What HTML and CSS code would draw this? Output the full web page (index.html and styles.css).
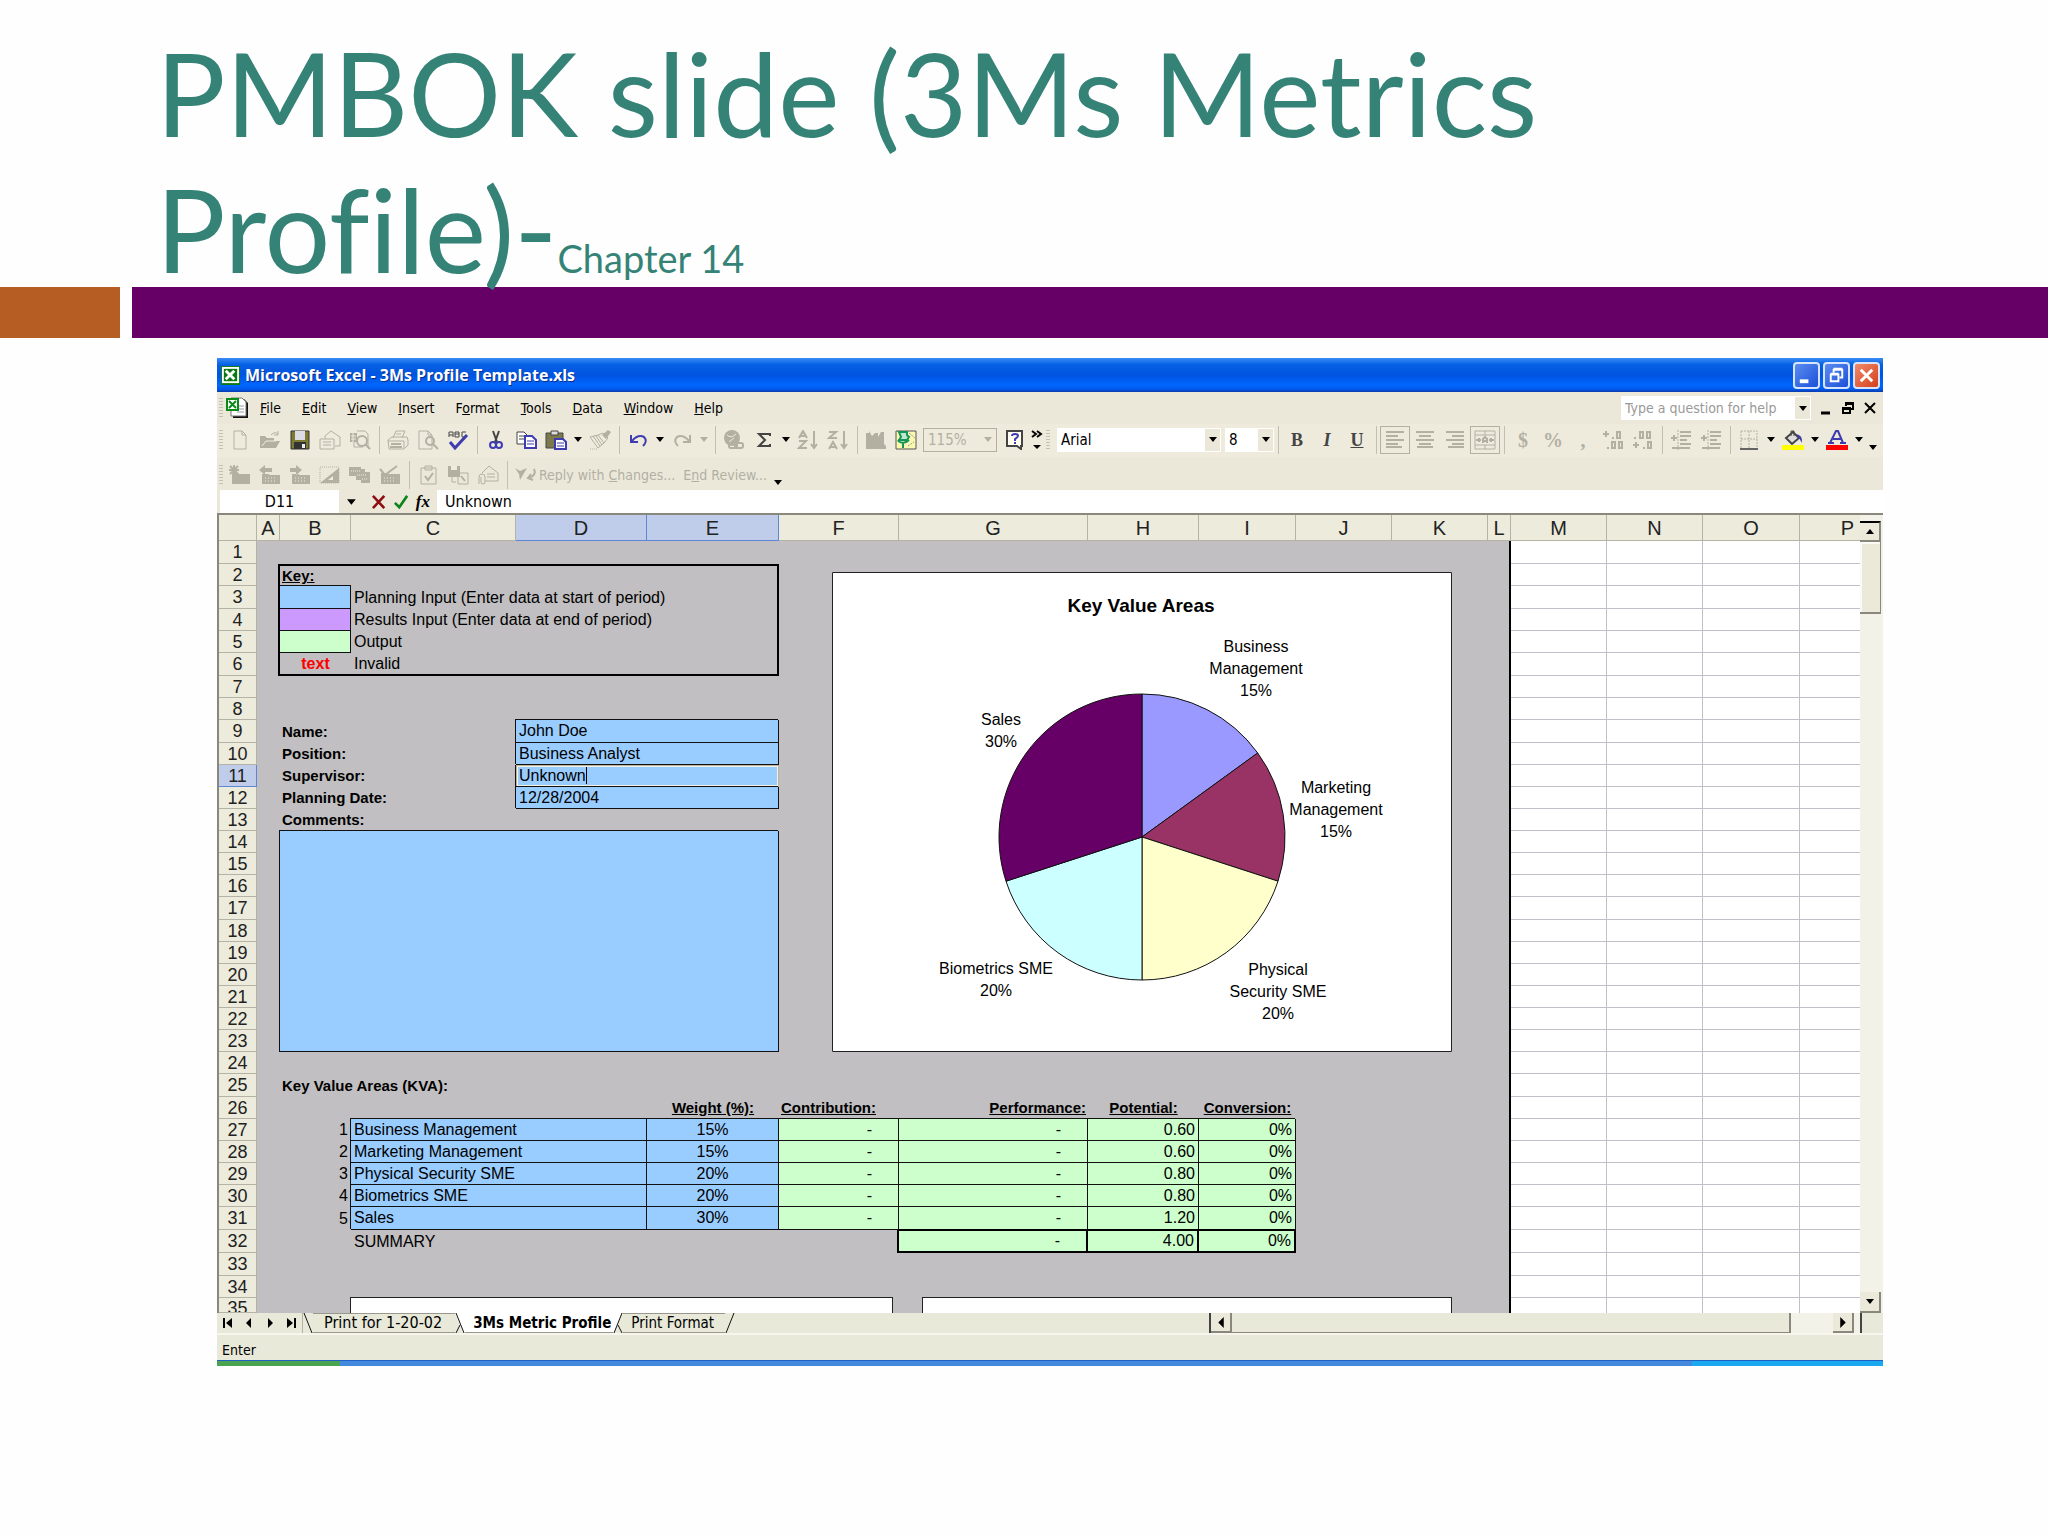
FILE: index.html
```html
<!DOCTYPE html>
<html lang="en">
<head>
<meta charset="utf-8">
<title>PMBOK slide (3Ms Metrics Profile)</title>
<link rel="stylesheet" href="styles.css">
</head>
<body>
<header class="slide-head">
  <h1>PMBOK slide (3Ms Metrics<br>Profile)-<small>Chapter 14</small></h1>
  <div class="bars"><span class="bar-accent"></span><span class="bar-main"></span></div>
</header>

<main class="window">
  <div class="titlebar">
    <svg class="app" viewBox="0 0 20 20"><rect width="20" height="20" fill="#0b7a12"/><rect x="2" y="2" width="16" height="15" fill="#0b7a12" stroke="#fff" stroke-width="2"/><path d="M5 5l9 9M14 5l-9 9" stroke="#fff" stroke-width="3"/></svg>
    <span class="caption">Microsoft Excel - 3Ms Profile Template.xls</span>
    <button class="wbtn" aria-label="Minimize"><svg viewBox="0 0 24 24"><path d="M5 18h9" stroke="#fff" stroke-width="4"/></svg></button>
    <button class="wbtn" aria-label="Restore"><svg viewBox="0 0 24 24"><path d="M9 9V6h9v8h-3M9 5h9" fill="none" stroke="#fff" stroke-width="2"/><path d="M6 11h8v7H6zM6 10h8" fill="none" stroke="#fff" stroke-width="2"/></svg></button>
    <button class="wbtn close" aria-label="Close"><svg viewBox="0 0 24 24"><path d="M6 6l12 12M18 6L6 18" stroke="#fff" stroke-width="3"/></svg></button>
  </div>

  <nav class="menubar">
    <span class="grip"></span>
    <svg class="doc" viewBox="0 0 24 24"><path d="M8 3h11l4 4v15H8z" fill="#111"/><path d="M6 2h11l4 4v14H6z" fill="#fff" stroke="#777"/><path d="M12 10h7M12 13h7M12 16h7" stroke="#99a"/><rect x="1" y="2" width="13" height="13" fill="#0b8a1a"/><rect x="3" y="4" width="9" height="9" fill="#fff"/><path d="M4 5l7 7M11 5l-7 7" stroke="#0b8a1a" stroke-width="2"/></svg>
    <button><u>F</u>ile</button><button><u>E</u>dit</button><button><u>V</u>iew</button><button><u>I</u>nsert</button><button>F<u>o</u>rmat</button><button><u>T</u>ools</button><button><u>D</u>ata</button><button><u>W</u>indow</button><button><u>H</u>elp</button>
    <div class="combo ask"><input aria-label="Type a question for help" placeholder="Type a question for help"><span class="drop"><svg viewBox="0 0 8 5"><path d="M0 0h8L4 5z"/></svg></span></div>
    <button class="mdi" aria-label="Minimize workbook"><svg viewBox="0 0 14 14"><path d="M2 12h9" stroke="#000" stroke-width="3"/></svg></button>
    <button class="mdi" aria-label="Restore workbook"><svg viewBox="0 0 14 14"><path d="M5 5V2h7v6H9M5 3h7M2 7h7v5H2zM2 8h7" fill="none" stroke="#000" stroke-width="2"/></svg></button>
    <button class="mdi" aria-label="Close workbook"><svg viewBox="0 0 14 14"><path d="M2 2l10 10M12 2L2 12" stroke="#000" stroke-width="2"/></svg></button>
  </nav>

  <div class="toolbar">
    <span class="grip"></span>
    <button aria-label="New"><svg viewBox="0 0 22 20"><path class="o" d="M5 1h8l4 4v14H5zM13 1v4h4"/></svg></button>
    <button aria-label="Open"><svg viewBox="0 0 22 20"><path class="o" d="M12 5q4-4 7-1m0-3v4h-4"/><path class="f" d="M1 6h5l2 2h7v3h6l-4 7H1z"/><path d="M3 16l4-5h10" fill="none" stroke="#efecde"/></svg></button>
    <button aria-label="Save"><svg viewBox="0 0 22 20"><path d="M2 1h18v18H2z" fill="#7c7a33" stroke="#333"/><path d="M6 1h10v9H6z" fill="#dcdce6"/><path d="M5 12h12v7H5z" fill="#333"/><path d="M13 14h3v4h-3z" fill="#eee"/></svg></button>
    <button aria-label="Permission"><svg viewBox="0 0 22 20"><path class="o" d="M1 9h14v10H1zM4 12h8M4 15h8M6 9V6l6-5 9 6v9h-5"/></svg></button>
    <button aria-label="Search"><svg viewBox="0 0 22 20"><path class="f" d="M1 3h7v9H1z"/><path d="M2 6h5M2 9h5M4 3v9" stroke="#efecde"/><path class="o" d="M8 1h8l3 3v12M5 12v5h9"/><circle cx="13" cy="11" r="5" class="k"/><path class="k" d="M16 14l5 5"/></svg></button>
    <i class="sep"></i>
    <button aria-label="Print"><svg viewBox="0 0 22 20"><path class="o" d="M6 8l3-7h9l-3 7M1 10l4-3h15l1 3v5l-4 4H2zM1 11h16v7M9 4h5"/><path class="k" d="M4 14h10M3 17h12"/></svg></button>
    <button aria-label="Print preview"><svg viewBox="0 0 22 20"><path class="o" d="M2 1h9l4 4v14H2zM11 1v4h4"/><circle cx="13" cy="11" r="4" class="k"/><path class="k" d="M16 14l5 5"/></svg></button>
    <button aria-label="Spelling"><svg viewBox="0 0 22 20"><path d="M2 7V2h4v5M2 5h4M8 2h4v5H8zM8 4h4M19 2h-4v5h4" fill="none" stroke="#444"/><path d="M3 12l5 6L20 5" fill="none" stroke="#3f3bb0" stroke-width="3"/></svg></button>
    <i class="sep"></i>
    <button aria-label="Cut"><svg viewBox="0 0 22 20"><path d="M8 1l4 11M14 1l-4 11" stroke="#444" stroke-width="2"/><circle cx="8" cy="15" r="3" fill="none" stroke="#3f3bb0" stroke-width="2"/><circle cx="14" cy="15" r="3" fill="none" stroke="#3f3bb0" stroke-width="2"/></svg></button>
    <button aria-label="Copy"><svg viewBox="0 0 22 20"><path d="M2 2h7l3 3v9H2z" fill="#fff" stroke="#444"/><path d="M4 6h5M4 9h5" stroke="#444"/><path d="M10 6h7l4 4v8H10z" fill="#fff" stroke="#3f3bb0" stroke-width="2"/><path d="M12 11h7M12 14h7" stroke="#3f3bb0"/></svg></button>
    <button aria-label="Paste"><svg viewBox="0 0 22 20"><path d="M1 3h17v15H1z" fill="#7c7a4d" stroke="#444"/><path d="M6 1h7v4H6z" fill="#ddd" stroke="#444"/><path d="M10 9h8l3 3v7H10z" fill="#fff" stroke="#3f3bb0" stroke-width="2"/><path d="M12 13h7M12 16h7" stroke="#3f3bb0"/></svg></button>
    <button class="arr" aria-label="Paste options"><svg viewBox="0 0 8 5"><path d="M0 0h8L4 5z"/></svg></button>
    <button aria-label="Format painter"><svg viewBox="0 0 22 20"><path class="o" d="M1 7l8-2 6 8-6 5zM4 6l7 10M7 6l6 9M9 5l5-2 5 5-4 5"/><path class="f" d="M19 0l3 2-5 7-4-4z"/><path class="o" d="M1 19h8" stroke-dasharray="1 1"/></svg></button>
    <i class="sep"></i>
    <button aria-label="Undo"><svg viewBox="0 0 22 20"><path d="M4 5v7h7M5 11q6-7 12-4 4 4-1 9" fill="none" stroke="#3f3bb0" stroke-width="2"/></svg></button>
    <button class="arr" aria-label="Undo list"><svg viewBox="0 0 8 5"><path d="M0 0h8L4 5z"/></svg></button>
    <button aria-label="Redo"><svg viewBox="0 0 22 20"><path class="k" d="M19 5v7h-7M18 11Q12 4 6 7q-4 4 1 9"/></svg></button>
    <button class="arr off" aria-label="Redo list"><svg viewBox="0 0 8 5"><path d="M0 0h8L4 5z"/></svg></button>
    <i class="sep"></i>
    <button aria-label="Hyperlink"><svg viewBox="0 0 22 20"><circle cx="9" cy="8" r="8" class="f"/><path d="M4 5q4 4 9-1M6 12l5-4" stroke="#efecde" fill="none"/><rect x="6" y="13" width="8" height="5" rx="2" class="k"/><rect x="12" y="13" width="8" height="5" rx="2" class="k"/></svg></button>
    <button aria-label="AutoSum"><svg viewBox="0 0 22 20"><path d="M17 6V4H6l6 6-6 6h11v-2" fill="none" stroke="#444" stroke-width="2"/></svg></button>
    <button class="arr" aria-label="AutoSum list"><svg viewBox="0 0 8 5"><path d="M0 0h8L4 5z"/></svg></button>
    <button aria-label="Sort ascending"><svg viewBox="0 0 22 20"><path class="k" d="M2 8l4-7 4 7M3 6h6M2 11h7l-7 7h8M17 1v16M14 14l3 4 3-4"/></svg></button>
    <button aria-label="Sort descending"><svg viewBox="0 0 22 20"><path class="k" d="M2 2h7L2 8h8M2 19l4-7 4 7M3 17h6M17 1v16M14 14l3 4 3-4"/></svg></button>
    <i class="sep"></i>
    <button aria-label="Chart wizard"><svg viewBox="0 0 22 20"><path class="f" d="M1 3h3V1l3 5 3-3h3v4l3-5h3v12l2 2v3H1z"/></svg></button>
    <button class="on" aria-label="Drawing"><svg viewBox="0 0 22 20"><path d="M1 1h20v18H1z" fill="#fbf8b0" stroke="#555"/><path d="M4 2h8v3l2 2-2 3H4l2-3z" fill="#bfe8cf" stroke="#15945a" stroke-width="2"/><path d="M3 11q6 4 11-1M8 12v6" fill="none" stroke="#15945a" stroke-width="2"/><path d="M14 3l6 5M13 16l6-4" stroke="#99a" stroke-dasharray="2 1"/></svg></button>
    <div class="combo zoom off"><select aria-label="Zoom" disabled><option>115%</option></select><span class="drop"><svg viewBox="0 0 8 5"><path d="M0 0h8L4 5z"/></svg></span></div>
    <button aria-label="Help"><svg viewBox="0 0 22 20"><path d="M3 1h15v15h-1v3l-4-3H3z" fill="#fffef0" stroke="#444" stroke-width="2"/><path d="M8 6q0-2 3-2 3 0 3 2 0 1-3 3v2M11 12v2" fill="none" stroke="#3f3bb0" stroke-width="2"/></svg></button>
    <button class="arr" aria-label="More buttons"><svg class="more" viewBox="0 0 12 20"><path d="M1 1l4 3-4 3M6 1l4 3-4 3" fill="none" stroke="#000" stroke-width="2"/><path d="M2 15h8l-4 4z"/></svg></button>
    <span class="grip second"></span>
    <div class="combo font"><select aria-label="Font"><option>Arial</option></select><span class="drop"><svg viewBox="0 0 8 5"><path d="M0 0h8L4 5z"/></svg></span></div>
    <div class="combo size"><select aria-label="Font size"><option>8</option></select><span class="drop"><svg viewBox="0 0 8 5"><path d="M0 0h8L4 5z"/></svg></span></div>
    <i class="sep"></i>
    <button class="glyph"><b>B</b></button>
    <button class="glyph"><em>I</em></button>
    <button class="glyph"><u>U</u></button>
    <i class="sep"></i>
    <button class="pressed" aria-label="Align left"><svg viewBox="0 0 22 20"><path class="k" d="M2 2h18M2 6h12M2 10h18M2 14h12M2 17h16"/></svg></button>
    <button aria-label="Center"><svg viewBox="0 0 22 20"><path class="k" d="M2 2h18M5 6h12M2 10h18M5 14h12M3 17h16"/></svg></button>
    <button aria-label="Align right"><svg viewBox="0 0 22 20"><path class="k" d="M2 2h18M8 6h12M2 10h18M8 14h12M4 17h16"/></svg></button>
    <button class="pressed" aria-label="Merge and center"><svg viewBox="0 0 22 20"><path class="o" d="M1 1h20v18H1zM1 5h20M1 15h20M11 1v4M11 15v4"/><path class="k" d="M2 10h5M20 10h-5M5 8v4M17 8v4M9 13V9l2-2 2 2v4M9 11h4"/></svg></button>
    <i class="sep"></i>
    <button class="glyph dim"><b>$</b></button>
    <button class="glyph dim"><b>%</b></button>
    <button class="glyph dim"><b>,</b></button>
    <button class="dec" aria-label="Increase decimal"><svg viewBox="0 0 22 20"><path class="k" d="M1 4h6M4 1v6M10 8h2M5 18h2"/><path class="k" d="M15 2h3v6h-3zM10 12h3v6h-3zM17 12h3v6h-3z"/></svg></button>
    <button class="dec" aria-label="Decrease decimal"><svg viewBox="0 0 22 20"><path class="k" d="M2 8h2M8 2h3v6H8zM15 2h3v6h-3zM1 15h6M4 12v6M11 18h2M16 12h3v6h-3z"/></svg></button>
    <i class="sep"></i>
    <button aria-label="Decrease indent"><svg viewBox="0 0 22 20"><path class="k" d="M10 2h11M10 6h11M10 10h7M10 14h11M2 18h18M1 8h6M4 5v6"/><path class="o" d="M8 0v20" stroke-dasharray="2 1"/></svg></button>
    <button aria-label="Increase indent"><svg viewBox="0 0 22 20"><path class="k" d="M10 2h11M10 6h11M10 10h7M10 14h11M2 18h18M1 8h6M4 5v6"/><path class="o" d="M8 0v20" stroke-dasharray="2 1"/></svg></button>
    <i class="sep"></i>
    <button aria-label="Borders"><svg viewBox="0 0 22 20"><path class="o" d="M3 1h16v17M3 1v17M11 1v17M3 9h16" stroke-dasharray="2 1"/><path d="M2 19h18" stroke="#666" stroke-width="2"/></svg></button>
    <button class="arr" aria-label="Border list"><svg viewBox="0 0 8 5"><path d="M0 0h8L4 5z"/></svg></button>
    <button aria-label="Fill color"><svg viewBox="0 0 22 20"><path d="M4 8l7-6 6 6-7 6z" fill="#ddd" stroke="#444" stroke-width="2"/><path d="M9 6V1h3v5" fill="none" stroke="#444"/><path d="M14 4q7 1 6 9l-3-5z" fill="#3f3bb0"/><path d="M0 15h22v5H0z" fill="#ff0"/></svg></button>
    <button class="arr" aria-label="Fill color list"><svg viewBox="0 0 8 5"><path d="M0 0h8L4 5z"/></svg></button>
    <button aria-label="Font color"><svg viewBox="0 0 22 20"><path d="M4 13l6-12h2l5 12M7 9h8M2 13h6M14 13h6" fill="none" stroke="#3f3bb0" stroke-width="2"/><path d="M0 15h22v5H0z" fill="#f00"/></svg></button>
    <button class="arr" aria-label="Font color list"><svg viewBox="0 0 8 5"><path d="M0 0h8L4 5z"/></svg></button>
    <button class="arr low" aria-label="Toolbar options"><svg viewBox="0 0 8 5"><path d="M0 0h8L4 5z"/></svg></button>
  </div>

  <div class="toolbar review">
    <span class="grip"></span>
    <button aria-label="New comment"><svg viewBox="0 0 22 20"><path class="f" d="M3 7h5l2 2h11v10H3z"/><path class="k" d="M1 1l8 8M9 1L1 9M5 0v10M0 5h10"/></svg></button>
    <button aria-label="Previous comment"><svg viewBox="0 0 22 20"><path class="f" d="M3 9h6l2 1h10v9H3zM0 5l6-5v3h7v4H6v3z"/><path d="M6 13h11M6 16h11" stroke="#efecde" stroke-dasharray="1 2"/></svg></button>
    <button aria-label="Next comment"><svg viewBox="0 0 22 20"><path class="f" d="M3 9h6l2 1h10v9H3zM13 5L7 0v3H1v4h6v3z"/><path d="M6 13h11M6 16h11" stroke="#efecde" stroke-dasharray="1 2"/></svg></button>
    <button aria-label="Show comment"><svg viewBox="0 0 22 20"><path class="o" d="M1 2h19v16H1z" stroke-dasharray="1 1"/><path class="f" d="M1 18L20 3v15z"/><path d="M9 15l5-4v4z" fill="#efecde"/></svg></button>
    <button aria-label="Show all comments"><svg viewBox="0 0 22 20"><path class="f" d="M0 2h12v2h4v3h5v11h-9v-3H7v-4H0z"/><path d="M2 6h9M8 10h9M13 14h6" stroke="#efecde" stroke-dasharray="1 1"/></svg></button>
    <button aria-label="Delete comment"><svg viewBox="0 0 22 20"><path class="f" d="M2 8h6l2 1h11v10H2z"/><path class="k" d="M1 4l5 6L18 1"/><path d="M5 13h12M5 16h12" stroke="#efecde" stroke-dasharray="1 2"/></svg></button>
    <i class="sep"></i>
    <button aria-label="Create task"><svg viewBox="0 0 22 20"><path class="o" d="M4 3h15v16H4zM8 1h7v4H8z"/><path class="k" d="M8 11l3 4 5-7"/></svg></button>
    <button aria-label="Update file"><svg viewBox="0 0 22 20"><path class="f" d="M1 1h12v11H1z"/><path d="M4 1h6v4H4z" fill="#efecde"/><path class="o" d="M11 8h10v11H11zM5 12v5h4"/><path class="k" d="M14 11l4 5"/></svg></button>
    <button aria-label="Mail recipient"><svg viewBox="0 0 22 20"><path class="o" d="M5 8l7-7 9 7v8H8M10 9h8M10 12h8M2 19v-7q0-3 3-3t3 3v5q0 2-2 2t-2-2v-5"/></svg></button>
    <i class="sep"></i>
    <button class="reply"><svg viewBox="0 0 22 20"><path class="f" d="M0 3l5 3 7-3-7 12-1-6z"/><path class="k" d="M19 4q3 6-5 9M16 9l-3 4 5 2"/></svg><span>Reply with <u>C</u>hanges...</span></button>
    <button class="reply"><span>E<u>n</u>d Review...</span></button>
    <button class="arr low" aria-label="Toolbar options"><svg viewBox="0 0 8 5"><path d="M0 0h8L4 5z"/></svg></button>
  </div>

  <div class="formula">
    <input class="name" aria-label="Name box" value="D11">
    <div class="fx">
      <svg class="tri" viewBox="0 0 8 5"><path d="M0 0h8L4 5z"/></svg>
      <svg class="mark" viewBox="0 0 16 16"><path d="M1 1l13 14M14 1L1 15" stroke="#8c0d12" stroke-width="3"/></svg>
      <svg class="mark" viewBox="0 0 16 16"><path d="M1 9l5 5L15 1" fill="none" stroke="#0b8418" stroke-width="3"/></svg>
      <i>fx</i>
    </div>
    <input class="entry" aria-label="Formula" value="Unknown">
  </div>

  <div class="sheet">
    <div class="grid">
    <table>
      <colgroup><col class="c0"><col class="cA"><col class="cB"><col class="cC"><col class="cD"><col class="cE"><col class="cF"><col class="cG"><col class="cH"><col class="cI"><col class="cJ"><col class="cK"><col class="cA"><col class="cK"><col class="cK"><col class="cI"><col></colgroup>
      <thead><tr><th><th>A<th>B<th>C<th class="sel">D<th class="sel">E<th>F<th>G<th>H<th>I<th>J<th>K<th>L<th>M<th>N<th>O<th class="cut">P</tr></thead>
      <tbody>
      <tr class="t"><th>1<td class="s e" colspan="12"><td><td><td><td></tr>
      <tr><th>2<td class="s kr"><td class="s kt kr h" colspan="4"><u>Key:</u><td class="s e" colspan="7"><td><td><td><td></tr>
      <tr class="t"><th>3<td class="s kr"><td class="x in key"><td class="s kr" colspan="3">Planning Input (Enter data at start of period)<td class="s e" colspan="7"><td><td><td><td></tr>
      <tr><th>4<td class="s kr"><td class="x res key"><td class="s kr" colspan="3">Results Input (Enter data at end of period)<td class="s e" colspan="7"><td><td><td><td></tr>
      <tr><th>5<td class="s kr"><td class="x out key"><td class="s kr" colspan="3">Output<td class="s e" colspan="7"><td><td><td><td></tr>
      <tr class="t"><th>6<td class="s kr"><td class="s kb bad">text<td class="s kr kb" colspan="3">Invalid<td class="s e" colspan="7"><td><td><td><td></tr>
      <tr><th>7<td class="s e" colspan="12"><td><td><td><td></tr>
      <tr><th>8<td class="s e" colspan="12"><td><td><td><td></tr>
      <tr class="t"><th>9<td class="s"><td class="s h" colspan="2">Name:<td class="x in" colspan="2">John Doe<td class="s e" colspan="7"><td><td><td><td></tr>
      <tr><th>10<td class="s"><td class="s h" colspan="2">Position:<td class="x in" colspan="2">Business Analyst<td class="s e" colspan="7"><td><td><td><td></tr>
      <tr><th class="sel">11<td class="s"><td class="s h" colspan="2">Supervisor:<td class="x in edit" colspan="2"><span class="caret">Unknown</span><td class="s e" colspan="7"><td><td><td><td></tr>
      <tr><th>12<td class="s"><td class="s h" colspan="2">Planning Date:<td class="x in" colspan="2">12/28/2004<td class="s e" colspan="7"><td><td><td><td></tr>
      <tr><th>13<td class="s"><td class="s h" colspan="4">Comments:<td class="s e" colspan="7"><td><td><td><td></tr>
      <tr><th>14<td class="s r"><td class="x in" colspan="4" rowspan="10"><td class="s e" colspan="7"><td><td><td><td></tr>
      <tr><th>15<td class="s r"><td class="s e" colspan="7"><td><td><td><td></tr>
      <tr><th>16<td class="s r"><td class="s e" colspan="7"><td><td><td><td></tr>
      <tr class="t"><th>17<td class="s r"><td class="s e" colspan="7"><td><td><td><td></tr>
      <tr><th>18<td class="s r"><td class="s e" colspan="7"><td><td><td><td></tr>
      <tr><th>19<td class="s r"><td class="s e" colspan="7"><td><td><td><td></tr>
      <tr><th>20<td class="s r"><td class="s e" colspan="7"><td><td><td><td></tr>
      <tr><th>21<td class="s r"><td class="s e" colspan="7"><td><td><td><td></tr>
      <tr><th>22<td class="s r"><td class="s e" colspan="7"><td><td><td><td></tr>
      <tr><th>23<td class="s r"><td class="s e" colspan="7"><td><td><td><td></tr>
      <tr><th>24<td class="s e" colspan="12"><td><td><td><td></tr>
      <tr class="t"><th>25<td class="s"><td class="s h" colspan="4">Key Value Areas (KVA):<td class="s e" colspan="7"><td><td><td><td></tr>
      <tr><th>26<td class="s" colspan="4"><td class="s h mid"><u>Weight (%):</u><td class="s h"><u>Contribution:</u><td class="s h num"><u>Performance:</u><td class="s h mid"><u>Potential:</u><td class="s h mid"><u>Conversion:</u><td class="s e" colspan="3"><td><td><td><td></tr>
      <tr><th>27<td class="s"><td class="s num">1<td class="x in" colspan="2">Business Management<td class="x in mid">15%<td class="x out dash">-<td class="x out dash">-<td class="x out num">0.60<td class="x out num">0%<td class="s e" colspan="3"><td><td><td><td></tr>
      <tr><th>28<td class="s"><td class="s num">2<td class="x in" colspan="2">Marketing Management<td class="x in mid">15%<td class="x out dash">-<td class="x out dash">-<td class="x out num">0.60<td class="x out num">0%<td class="s e" colspan="3"><td><td><td><td></tr>
      <tr><th>29<td class="s"><td class="s num">3<td class="x in" colspan="2">Physical Security SME<td class="x in mid">20%<td class="x out dash">-<td class="x out dash">-<td class="x out num">0.80<td class="x out num">0%<td class="s e" colspan="3"><td><td><td><td></tr>
      <tr><th>30<td class="s"><td class="s num">4<td class="x in" colspan="2">Biometrics SME<td class="x in mid">20%<td class="x out dash">-<td class="x out dash">-<td class="x out num">0.80<td class="x out num">0%<td class="s e" colspan="3"><td><td><td><td></tr>
      <tr class="t"><th>31<td class="s"><td class="s num">5<td class="x in" colspan="2">Sales<td class="x in mid">30%<td class="x out dash">-<td class="x out dash">-<td class="x out num">1.20<td class="x out num">0%<td class="s e" colspan="3"><td><td><td><td></tr>
      <tr class="t"><th>32<td class="s" colspan="2"><td class="s" colspan="3">SUMMARY<td class="s k"><td class="x out dash sum">-<td class="x out num sum">4.00<td class="x out num sum">0%<td class="s e" colspan="3"><td><td><td><td></tr>
      <tr class="t"><th>33<td class="s e" colspan="12"><td><td><td><td></tr>
      <tr><th>34<td class="s e" colspan="12"><td><td><td><td></tr>
      <tr class="last"><th><div>35</div><td class="s e" colspan="12"><td><td><td><td></tr>
      </tbody>
    </table>
    <svg class="chart" viewBox="0 0 620 480">
      <rect x="0" y="0" width="620" height="480" fill="#fff"/>
      <path d="M0.500 0.500h619v479h-619z" fill="none" stroke="#222"/>
      <g stroke="#111" stroke-linejoin="round">
        <path d="M310 265V122A143 143 0 0 1 425.700 181Z" fill="#99f"/>
        <path d="M310 265L425.700 181A143 143 0 0 1 446 309.200Z" fill="#936"/>
        <path d="M310 265L446 309.200A143 143 0 0 1 310 408Z" fill="#ffc"/>
        <path d="M310 265V408A143 143 0 0 1 174 309.200Z" fill="#cff"/>
        <path d="M310 265L174 309.200A143 143 0 0 1 310 122Z" fill="#606"/>
      </g>
      <text class="ct" x="309" y="40">Key Value Areas</text>
      <text x="424" y="80">Business</text><text x="424" y="102">Management</text><text x="424" y="124">15%</text>
      <text x="169" y="153">Sales</text><text x="169" y="175">30%</text>
      <text x="504" y="221">Marketing</text><text x="504" y="243">Management</text><text x="504" y="265">15%</text>
      <text x="446" y="403">Physical</text><text x="446" y="425">Security SME</text><text x="446" y="447">20%</text>
      <text x="164" y="402">Biometrics SME</text><text x="164" y="424">20%</text>
    </svg>
    <div class="stub one"></div>
    <div class="stub two"></div>
    </div>
    <div class="vscroll">
      <button aria-label="Scroll up"><svg viewBox="0 0 8 5"><path d="M0 5h8L4 0z"/></svg></button>
      <span class="thumb"></span>
      <span class="rest"></span>
      <button aria-label="Scroll down"><svg viewBox="0 0 8 5"><path d="M0 0h8L4 5z"/></svg></button>
    </div>
  </div>

  <div class="tabs">
    <div class="nav">
      <button aria-label="First sheet"><svg viewBox="0 0 12 12"><path d="M2 1v10" stroke="#000" stroke-width="2"/><path d="M10 1v10L4 6z"/></svg></button>
      <button aria-label="Previous sheet"><svg viewBox="0 0 12 12"><path d="M8 1v10L3 6z"/></svg></button>
      <button aria-label="Next sheet"><svg viewBox="0 0 12 12"><path d="M4 1v10l5-5z"/></svg></button>
      <button aria-label="Last sheet"><svg viewBox="0 0 12 12"><path d="M10 1v10" stroke="#000" stroke-width="2"/><path d="M2 1v10l6-5z"/></svg></button>
    </div>
    <svg class="edge" viewBox="0 0 10 20"><path d="M1 0l8 20" stroke="#111"/></svg>
    <button class="tab">Print for 1-20-02</button>
    <svg class="edge" viewBox="0 0 10 20"><path d="M0 0h10v20H8z" fill="#fff"/><path d="M1 0l8 20M1 20l4-8" stroke="#111"/></svg>
    <button class="tab cur">3Ms Metric Profile</button>
    <svg class="edge" viewBox="0 0 10 20"><path d="M0 0h9L1 20H0z" fill="#fff"/><path d="M9 0L1 20M5 12l4 8" stroke="#111"/></svg>
    <button class="tab end">Print Format</button>
    <svg class="edge" viewBox="0 0 10 20"><path d="M9 0L1 20" stroke="#111"/></svg>
    <div class="hscroll">
      <button aria-label="Scroll left"><svg viewBox="0 0 5 10"><path d="M5 0v10L0 5z"/></svg></button>
      <span class="hthumb"></span><span class="hrest"></span>
      <button aria-label="Scroll right"><svg viewBox="0 0 5 10"><path d="M0 0v10l5-5z"/></svg></button>
    </div>
    <span class="corner"></span>
  </div>
  <div class="status">Enter</div>
  <div class="taskbar"><span class="start"></span><span class="run"></span><span class="tray"></span></div>
</main>
</body>
</html>
```
FILE: styles.css
```css
* { box-sizing: border-box; }
body { margin: 0; background: #fefefe; color: #000; }
button, input, select { font: inherit; color: inherit; border: 0; padding: 0; margin: 0; background: none; border-radius: 0; }
svg { display: block; }

.slide-head h1 {
  position: relative; z-index: 1; margin: 0; padding: 25px 0 0 156px;
  font: 400 116px/136px Lato, "Open Sans", sans-serif; color: #358377;
  font-variant-ligatures: none;
}
.slide-head small { font-size: 38px; line-height: 38px; }
.bars { display: flex; gap: 12px; height: 51px; margin-top: -10px; }
.bar-accent { width: 120px; background: #b65d23; }
.bar-main { flex: 1; background: #606; }

.window {
  margin: 20px 165px 0 217px; background: #ebe8da;
  font: 15px/20px "DejaVu Sans Condensed", "DejaVu Sans", sans-serif;
}
.titlebar {
  display: flex; align-items: center; gap: 3px; height: 34px; padding: 0 3px 0 4px;
  background: linear-gradient(#3a8cf5, #0560e4 20%, #0054e0 50%, #06f 80%, #0058e8 92%, #0a3bb0);
}
.app { width: 19px; height: 19px; }
.caption { flex: 1; padding-left: 2px; color: #fff; font: 700 16px/20px "Open Sans", sans-serif; text-shadow: 1px 1px #0a2f8a; }
.wbtn { width: 27px; height: 27px; border: 2px solid #d8e4fb; border-radius: 4px; background: linear-gradient(135deg, #5a8cf0, #1c50d8); }
.wbtn.close { background: linear-gradient(135deg, #f08a6a, #d4401c); }

.menubar { display: flex; align-items: center; height: 32px; padding-right: 6px; font-size: 14px; }
.menubar > button { margin-left: 21px; }
.menubar > .doc + button { margin-left: 11px; }
.doc { width: 24px; height: 24px; }
.grip { width: 4px; height: 20px; margin: 0 2px; background: repeating-linear-gradient(#c4c1b2 0 1px, transparent 1px 3px); }
.second { margin-right: 7px; }
.combo { display: flex; align-items: stretch; height: 24px; background: #fff; }
.combo select, .combo input { flex: 1; min-width: 0; padding-left: 4px; appearance: none; outline: 0; opacity: 1; }
.drop { display: grid; place-items: center; width: 15px; margin: 1px; background: #ebe8da; }
.drop svg, .arr svg, .vscroll svg { width: 8px; height: 5px; }
.ask { width: 190px; margin-left: auto; }
.ask input::placeholder { color: #999; opacity: 1; }
.menubar > .mdi { width: 14px; height: 14px; margin-left: 8px; }

.toolbar { display: flex; align-items: center; height: 33px; padding-bottom: 2px; background: #eeebdd; }
.toolbar > button { flex: 0 0 30px; height: 28px; display: grid; place-items: center; }
.toolbar > button > svg { width: 22px; height: 20px; }
.toolbar .o { fill: none; stroke: #b3b0a2; }
.toolbar .k { fill: none; stroke: #b3b0a2; stroke-width: 2; }
.toolbar .f { fill: #b3b0a2; }
.toolbar > .arr { flex-basis: 14px; }
.toolbar > .arr > svg { width: 8px; height: 5px; }
.toolbar > .arr > .more { width: 12px; height: 20px; }
.toolbar > .low { align-items: end; padding-bottom: 4px; }
.off { fill: #b3b0a2; color: #b3b0a2; }
.sep { flex: 0 0 8px; height: 28px; background: linear-gradient(#c2bfb0, #c2bfb0) 4px 0 / 1px 100% no-repeat; }
.zoom { width: 74px; margin: 0 3px 0 2px; border: 1px solid #b3b0a2; background: none; }
.zoom .drop { background: none; }
.font { width: 164px; }
.size { width: 49px; margin-left: 4px; }
.toolbar > .pressed { border: 1px solid #b3b0a2; }
.glyph { font: 18px/20px "Liberation Serif", serif; color: #444; }
.glyph u, .glyph em { font-weight: 700; }
.toolbar > .dim { color: #b3b0a2; font-size: 20px; }
.review { padding: 2px 0 0; background: #ebe8da; font-size: 14px; }
.review > .reply { display: flex; align-items: center; flex: 0 0 auto; margin: 0 4px; gap: 2px; color: #b3b0a2; }

.formula { display: flex; height: 23px; padding-left: 3px; font-size: 16px; }
.name { width: 119px; background: #fff; text-align: center; }
.fx { display: flex; align-items: center; width: 98px; padding: 0 7px 0 8px; gap: 8px; }
.tri { width: 10px; height: 6px; margin-right: 8px; }
.mark { width: 16px; height: 16px; }
.fx i { font: italic 700 17px/20px "Liberation Serif", serif; }
.entry { flex: 1; background: #fff; padding-left: 8px; outline: 0; }

.sheet { display: flex; border: solid #8a887c; border-width: 2px 0 0 2px; }
.grid { position: relative; flex: 1; min-width: 0; overflow: hidden; background: #fff; }
table { width: 100%; table-layout: fixed; border-collapse: separate; border-spacing: 0; font: 16px/20px "Liberation Sans", sans-serif; }
.c0 { width: 38px; } .cA { width: 23px; } .cB { width: 71px; } .cC { width: 165px; }
.cD { width: 131px; } .cE { width: 132px; } .cF { width: 120px; } .cG { width: 189px; }
.cH { width: 111px; } .cI { width: 97px; } .cJ, .cK { width: 96px; }
th { padding: 0; background: #ecebdc; border: solid #b5b3a5; border-width: 0 1px 1px 0; font-size: 18px; font-weight: 400; color: #222; }
thead th { height: 26px; font-size: 20px; }
th.sel { background: #bfcdea; border-color: #5b87d6; }
th.cut { text-align: right; padding-right: 6px; border-right: 0; }
td { height: 22px; padding: 0 3px; border: solid #c3bfca; border-width: 0 1px 1px 0; white-space: nowrap; line-height: 18px; }
.t td { height: 23px; }
.last td { height: 15px; border-bottom: 0; }
.last div { height: 14px; overflow: hidden; }
td:last-child { border-right: 0; }
td.s { background: #c1bfc1; border: 0; }
td.e { border-right: 2px solid #000; }
td.x { border: solid #111; border-width: 0 1px 1px 0; box-shadow: -1px -1px #111; }
td.key { box-shadow: 0 -1px #111; }
td.in { background: #9cf; }
td.res { background: #c9f; }
td.out { background: #cfc; }
td.r { border-right: 1px solid #111; }
td.kt { border-top: 2px solid #000; }
td.kb { border-bottom: 2px solid #000; }
td.kr { border-right: 2px solid #000; }
td.h { padding: 0 2px; font-weight: 700; font-size: 15px; }
td.bad { color: #f00; font-weight: 700; text-align: center; }
td.mid { text-align: center; }
td.num { text-align: right; }
td.dash { text-align: right; padding-right: 26px; }
td.sum { border: solid #000; border-width: 1px 2px 2px 0; box-shadow: 0 -1px #000; }
td.k { border-right: 2px solid #000; }
td.edit { border: 1px solid #b9b39c; box-shadow: inset 0 0 0 1px #f4f1e6, -1px 0 #111; padding-left: 2px; }
.caret { border-right: 1px solid #000; }
.chart { position: absolute; left: 613px; top: 57px; width: 620px; height: 480px; font: 16px "Liberation Sans", sans-serif; text-anchor: middle; }
.ct { font-size: 19px; font-weight: 700; }
.stub { position: absolute; bottom: 0; height: 16px; background: #fff; border: solid #222; border-width: 1px 1px 0; }
.one { left: 131px; width: 543px; }
.two { left: 703px; width: 530px; }

.vscroll { display: flex; flex-direction: column; width: 23px; padding: 6px 2px 0 0; background: #f3f2e8; border-top: 0; }
.vscroll button, .hscroll button { display: grid; place-items: center; flex: 0 0 21px; background: #ebe9da; border: solid #8a887c; border-width: 0 2px 2px 0; }
.vscroll button:first-child { border-top: 2px solid #000; }
.thumb { flex: 0 0 72px; background: #ebe9da; border: solid #8a887c; border-width: 0 1px 2px 0; box-shadow: inset 2px 2px #fbfaf4; }
.rest { flex: 1; }

.tabs { display: flex; height: 22px; background: #e8e9d9; border-bottom: 2px solid #f6f6ee; font-size: 16px; }
.nav { display: flex; align-items: center; width: 86px; justify-content: space-around; border-right: 1px solid #b5b3a5; }
.nav svg { width: 12px; height: 12px; }
.edge { flex: 0 0 10px; height: 20px; }
.tab { padding: 0 13px 0 11px; border: solid #9a988c; border-width: 1px 0; line-height: 18px; }
.cur { padding: 0 2px 0 8px; background: #fff; font-size: 15px; font-weight: 700; border-top-color: #fff; }
.end { padding: 0 11px 0 8px; font-size: 15px; }
.hscroll { display: flex; width: 651px; margin-left: auto; border-left: 2px solid #444; background: #f3f2e8; padding-right: 6px; }
.hscroll svg { width: 6px; height: 11px; }
.hthumb { flex: 1; background: #e8e9d9; border: solid #8a887c; border-width: 0 2px 1px 0; }
.hrest { width: 42px; }
.corner { width: 23px; border-left: 2px solid #444; }
.status { height: 25px; padding: 5px 5px 0; background: #e8e9d9; font-size: 14px; }
.taskbar { display: flex; height: 6px; border-top: 1px solid #2060c4; }
.start { width: 123px; background: #4aa350; }
.run { flex: 1; background: #4288dc; }
.tray { width: 191px; background: #1aa8f0; }
```
